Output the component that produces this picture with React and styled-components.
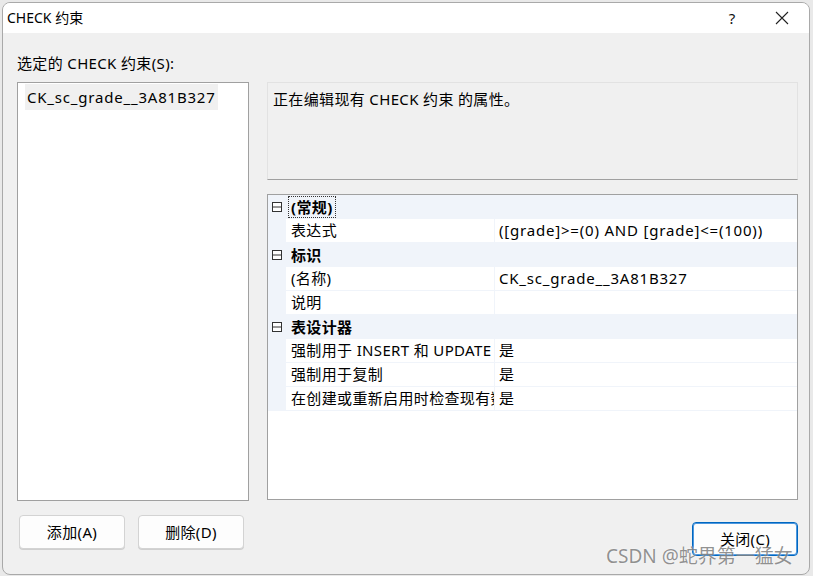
import React from "react";
import styled, { createGlobalStyle } from "styled-components";

const Global = createGlobalStyle`
  html, body { margin: 0; padding: 0; background: #e9e9e9; }
  body { font-family: "Noto Sans", "Noto Sans CJK SC", sans-serif; font-size: 14px; color: #000; }
  * { box-sizing: border-box; }
`;

const Screen = styled.div`
  width: 813px;
  height: 576px;
  padding: 2px 3px 2px 2px;
  position: relative;
  overflow: hidden;
`;

const Window = styled.div`
  width: 808px;
  height: 573px;
  border: 1px solid #a9a9a9;
  border-radius: 8px;
  overflow: hidden;
  background: #f0f0f0;
  display: flex;
  flex-direction: column;
`;

const TitleBar = styled.div`
  height: 30px;
  background: #ffffff;
  display: flex;
  align-items: center;
  padding-left: 4px;
  flex: none;
`;

const Title = styled.div`
  flex: 1;
  font-size: 14px;
  line-height: 20px;
`;

const TitleButton = styled.div`
  width: ${(p) => p.$w}px;
  height: 30px;
  display: flex;
  align-items: center;
  justify-content: center;
  font-size: 15px;
  color: #111;
`;

const Body = styled.div`
  flex: 1;
  display: flex;
  flex-direction: column;
  padding: 20px 10px 0 14px;
  font-size: 15px;
  letter-spacing: 0.35px;
`;

const Main = styled.div`
  display: grid;
  grid-template-columns: 232px 531px;
  grid-template-rows: 20px 419px;
  column-gap: 18px;
  row-gap: 9px;
`;

const Label = styled.div`
  grid-column: 1;
  grid-row: 1;
  line-height: 20px;
  white-space: nowrap;
`;

const List = styled.div`
  grid-column: 1;
  grid-row: 2;
  background: #fff;
  border: 1px solid #a0a0a0;
  padding: 1px 0 0 7px;
`;

const ListItem = styled.div`
  display: inline-block;
  height: 26px;
  line-height: 26px;
  padding: 0 2px;
  letter-spacing: 0.8px;
  background: ${(p) => (p.$selected ? "#f0f0f0" : "transparent")};
`;

const RightCol = styled.div`
  grid-column: 2;
  grid-row: 2;
  display: flex;
  flex-direction: column;
  gap: 14px;
`;

const Description = styled.div`
  height: 98px;
  background: #f0f0f0;
  border: 1px solid #e2e2e2;
  border-bottom-color: #a0a0a0;
  padding: 6px 5px;
  line-height: 20px;
`;

const PropGrid = styled.div`
  height: 306px;
  background: #fff;
  border: 1px solid #a0a0a0;
  display: flex;
  flex-direction: column;
`;

const CategoryRow = styled.div`
  height: 24px;
  background: #f0f4fa;
  display: flex;
  align-items: center;
  flex: none;
`;

const Toggle = styled.svg`
  width: 18px;
  flex: none;
  display: block;
`;

const CategoryName = styled.div`
  margin-left: 2px;
  padding: 0 2px;
  height: 22px;
  line-height: 20px;
  font-weight: 700;
  border: 1px ${(p) => (p.$focused ? "dotted #333" : "solid transparent")};
`;

const PropRow = styled.div`
  height: 24px;
  display: flex;
  flex: none;
  border-bottom: 1px solid #f0f4fa;
`;

const Gutter = styled.div`
  width: 18px;
  background: #f0f4fa;
  flex: none;
`;

const NameCell = styled.div`
  width: 209px;
  flex: none;
  padding-left: 5px;
  line-height: 23px;
  white-space: nowrap;
  overflow: hidden;
  border-right: 1px solid #f0f4fa;
`;

const ValueCell = styled.div`
  flex: 1;
  padding-left: 4px;
  line-height: 23px;
  white-space: nowrap;
  overflow: hidden;
  letter-spacing: 0.8px;
`;

const Footer = styled.div`
  display: flex;
  justify-content: space-between;
  padding: 0 1px 0 2px;
  margin-top: 14px;
`;

const ButtonGroup = styled.div`
  display: flex;
  gap: 13px;
  align-self: flex-start;
`;

const Button = styled.div`
  width: 106px;
  height: 34px;
  border-radius: 4px;
  background: #fdfdfd;
  border: 1px solid ${(p) => (p.$default ? "#0067c0" : "#d3d3d3")};
  box-shadow: ${(p) => (p.$default ? "inset 0 0 0 1px #4d97de" : "0 1px 0 #cfcfcf")};
  display: flex;
  align-items: center;
  justify-content: center;
  line-height: 20px;
  margin-top: ${(p) => p.$offset || 0}px;
`;

const Watermark = styled.div`
  position: absolute;
  left: 606px;
  top: 543px;
  font-size: 19px;
  line-height: 26px;
  color: rgba(110, 110, 110, 0.75);
  white-space: nowrap;
  text-shadow: 0 0 2px rgba(255, 255, 255, 0.8);
  pointer-events: none;
`;

const ToggleIcon = () => (
  <Toggle viewBox="0 0 18 24" height="24">
    <rect x="4.5" y="7.5" width="9" height="9" fill="#fff" stroke="#333" strokeWidth="1" />
    <line x1="4.5" y1="12" x2="13.5" y2="12" stroke="#333" strokeWidth="1" />
  </Toggle>
);

const sections = [
  { name: "(常规)", focused: true, props: [["表达式", "([grade]>=(0) AND [grade]<=(100))"]] },
  { name: "标识", props: [["(名称)", "CK_sc_grade__3A81B327"], ["说明", ""]] },
  {
    name: "表设计器",
    props: [
      ["强制用于 INSERT 和 UPDATE", "是"],
      ["强制用于复制", "是"],
      ["在创建或重新启用时检查现有数据", "是"],
    ],
  },
];

export default function App() {
  return (
    <Screen>
      <Global />
      <Window>
        <TitleBar>
          <Title>CHECK 约束</Title>
          <TitleButton $w={46}>?</TitleButton>
          <TitleButton $w={54}>
            <svg width="14" height="14" viewBox="0 0 14 14">
              <path d="M1 1 L13 13 M13 1 L1 13" stroke="#222" strokeWidth="1.1" fill="none" />
            </svg>
          </TitleButton>
        </TitleBar>
        <Body>
          <Main>
            <Label>选定的 CHECK 约束(S):</Label>
            <List>
              <ListItem $selected>CK_sc_grade__3A81B327</ListItem>
            </List>
            <RightCol>
              <Description>正在编辑现有 CHECK 约束 的属性。</Description>
              <PropGrid>
                {sections.map((s) => (
                  <React.Fragment key={s.name}>
                    <CategoryRow>
                      <ToggleIcon />
                      <CategoryName $focused={s.focused}>{s.name}</CategoryName>
                    </CategoryRow>
                    {s.props.map(([n, v]) => (
                      <PropRow key={n}>
                        <Gutter />
                        <NameCell>{n}</NameCell>
                        <ValueCell>{v}</ValueCell>
                      </PropRow>
                    ))}
                  </React.Fragment>
                ))}
              </PropGrid>
            </RightCol>
          </Main>
          <Footer>
            <ButtonGroup>
              <Button>添加(A)</Button>
              <Button>删除(D)</Button>
            </ButtonGroup>
            <Button $default $offset={7}>关闭(C)</Button>
          </Footer>
        </Body>
      </Window>
      <Watermark>CSDN @蛇界第一猛女</Watermark>
    </Screen>
  );
}
